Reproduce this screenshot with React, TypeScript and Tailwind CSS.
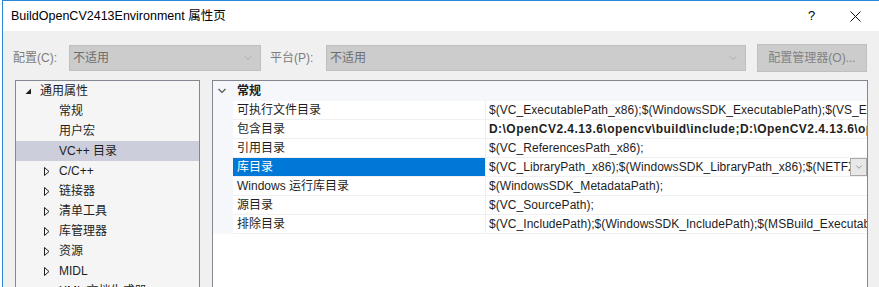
import { ChevronDown } from 'lucide-react'

interface TreeItem {
  label: string
  kind: 'open' | 'leaf' | 'closed'
  selected?: boolean
}

interface PropRow {
  name: string
  value: string
  bold?: boolean
  selected?: boolean
}

const tree: TreeItem[] = [
  { label: '通用属性', kind: 'open' },
  { label: '常规', kind: 'leaf' },
  { label: '用户宏', kind: 'leaf' },
  { label: 'VC++ 目录', kind: 'leaf', selected: true },
  { label: 'C/C++', kind: 'closed' },
  { label: '链接器', kind: 'closed' },
  { label: '清单工具', kind: 'closed' },
  { label: '库管理器', kind: 'closed' },
  { label: '资源', kind: 'closed' },
  { label: 'MIDL', kind: 'closed' },
  { label: 'XML 文档生成器', kind: 'closed' },
]

const rows: PropRow[] = [
  { name: '可执行文件目录', value: '$(VC_ExecutablePath_x86);$(WindowsSDK_ExecutablePath);$(VS_ExecutablePath);$(MSBuild_ExecutablePath)' },
  { name: '包含目录', value: 'D:\\OpenCV2.4.13.6\\opencv\\build\\include;D:\\OpenCV2.4.13.6\\opencv\\build\\include\\opencv', bold: true },
  { name: '引用目录', value: '$(VC_ReferencesPath_x86);' },
  { name: '库目录', value: '$(VC_LibraryPath_x86);$(WindowsSDK_LibraryPath_x86);$(NETFXKitsDir)Lib\\um\\x86', selected: true },
  { name: 'Windows 运行库目录', value: '$(WindowsSDK_MetadataPath);' },
  { name: '源目录', value: '$(VC_SourcePath);' },
  { name: '排除目录', value: '$(VC_IncludePath);$(WindowsSDK_IncludePath);$(MSBuild_ExecutablePath);$(VC_LibraryPath_x86)' },
]

function OpenArrow() {
  return (
    <svg width="7" height="7" viewBox="0 0 7 7">
      <path d="M6 0.5 L6 6 L0.5 6 Z" fill="#1e1e1e" />
    </svg>
  )
}

function ClosedArrow() {
  return (
    <svg width="6" height="9" viewBox="0 0 6 9">
      <path d="M0.5 0.5 L5 4.5 L0.5 8.5 Z" fill="none" stroke="#1e1e1e" strokeWidth="1" />
    </svg>
  )
}

function TreeRow({ item }: { item: TreeItem }) {
  return (
    <div className={`flex h-[20px] items-center whitespace-nowrap ${item.selected ? 'bg-[#cccedb]' : ''}`}>
      {item.kind === 'open' ? (
        <>
          <div className="flex w-[24px] justify-end pr-[8px]">
            <OpenArrow />
          </div>
          <span>{item.label}</span>
        </>
      ) : (
        <>
          <div className="flex w-[43px] justify-end pr-[9px]">{item.kind === 'closed' ? <ClosedArrow /> : null}</div>
          <span>{item.label}</span>
        </>
      )}
    </div>
  )
}

export default function App() {
  return (
    <div className="h-[287px] w-[879px] overflow-hidden bg-white pl-[2px] font-['Segoe_UI','Liberation_Sans','Noto_Sans_CJK_SC',sans-serif] text-[12px] text-[#1e1e1e]">
      <div className="flex h-full flex-col border-l border-t border-[#2b87d8]">
        <div className="flex h-[30px] shrink-0 items-center bg-white pl-[8px] text-[12.5px] text-black">
          <span className="flex-1">BuildOpenCV2413Environment 属性页</span>
          <span className="w-[42px] text-[13px]">?</span>
          <svg width="11" height="11" viewBox="0 0 11 11" className="mr-[18px]">
            <path d="M0.5 0.5 L10.5 10.5 M10.5 0.5 L0.5 10.5" stroke="#111" strokeWidth="1" />
          </svg>
        </div>

        <div className="flex flex-1 flex-col bg-[#f0f0f0]">
          <div className="mt-[13px] flex h-[28px] items-center text-[#7d7d7d]">
            <span className="w-[66px] pl-[10px]">配置(C):</span>
            <div className="flex h-[26px] w-[192px] items-center justify-between border border-[#bfbfbf] bg-[#cccccc] pl-[3px] pr-[6px] text-[#6d6d6d]">
              <span>不适用</span>
              <ChevronDown size={12} strokeWidth={1} color="#8a8a8a" />
            </div>
            <span className="w-[65px] pl-[9px]">平台(P):</span>
            <div className="flex h-[26px] w-[420px] items-center justify-between border border-[#bfbfbf] bg-[#cccccc] pl-[3px] pr-[6px] text-[#6d6d6d]">
              <span>不适用</span>
              <ChevronDown size={12} strokeWidth={1} color="#8a8a8a" />
            </div>
            <div className="ml-[11px] flex h-[28px] w-[110px] items-center justify-center border border-[#bfbfbf] bg-[#cccccc] text-[#838383]">
              配置管理器(O)...
            </div>
          </div>

          <div className="mt-[8px] flex flex-1 gap-[12px] pl-[12px]">
            <div className="w-[185px] border-l border-r border-t border-[#828790] bg-[#f5f5f5] text-[12px] text-[#1e1e1e]">
              {tree.map((item) => (
                <TreeRow key={item.label} item={item} />
              ))}
            </div>

            <div className="flex w-[656px] flex-col overflow-hidden border-l border-r border-t border-[#828790] bg-white">
              <div className="flex h-[20px] shrink-0 items-center bg-[#f5f7fa]">
                <svg width="20" height="20" viewBox="0 0 20 20" className="shrink-0">
                  <path d="M5.5 8 L9 11.5 L12.5 8" fill="none" stroke="#555" strokeWidth="1.2" />
                </svg>
                <span className="pl-[4px] font-bold">常规</span>
              </div>
              {rows.map((row) => (
                <div key={row.name} className="flex h-[19px] shrink-0">
                  <div className="w-[20px] shrink-0 bg-[#f5f7fa]" />
                  <div
                    className={`flex w-[253px] shrink-0 items-center whitespace-nowrap border-b border-r border-[#f0f0f0] pl-[4px] ${
                      row.selected ? 'bg-[#0078d7] text-white' : ''
                    }`}
                  >
                    {row.name}
                  </div>
                  <div className="relative flex min-w-0 flex-1 items-center overflow-hidden whitespace-nowrap border-b border-[#f0f0f0] pl-[3px]">
                    <span className={row.bold ? 'font-bold tracking-[0.45px]' : 'tracking-[0.05px]'}>{row.value}</span>
                    {row.selected ? (
                      <div className="absolute right-0 top-0 flex h-[18px] w-[17px] items-center justify-center border border-[#a9a9a9] bg-[#e8e8e8]">
                        <ChevronDown size={10} strokeWidth={1.2} color="#444" />
                      </div>
                    ) : null}
                  </div>
                </div>
              ))}
              <div className="flex-1 bg-white" />
            </div>
          </div>
        </div>
      </div>
    </div>
  )
}
